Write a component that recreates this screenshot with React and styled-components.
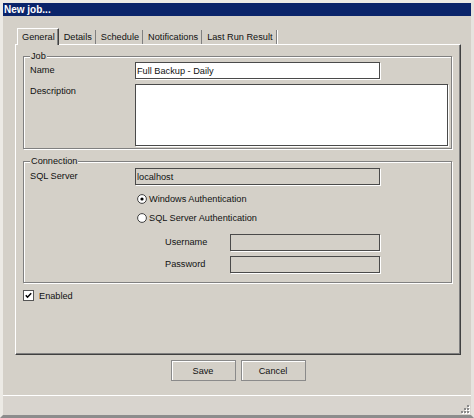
import React from 'react'
import styled, { createGlobalStyle } from 'styled-components'

const GlobalStyle = createGlobalStyle`
  body {
    margin: 0;
    background: #d4d0c8;
  }
`

const tabs = ['General', 'Details', 'Schedule', 'Notifications', 'Last Run Result']

function Radio({ checked }) {
  return (
    <svg width="10" height="10" viewBox="0 0 10 10">
      <circle cx="5" cy="5" r="4.4" fill="#fff" stroke="#404040" strokeWidth="1" />
      {checked && <circle cx="5" cy="5" r="1.6" fill="#000" />}
    </svg>
  )
}

function Checkbox() {
  return (
    <svg width="11" height="11" viewBox="0 0 11 11">
      <rect x="0.5" y="0.5" width="10" height="10" fill="#fff" stroke="#555" />
      <path d="M2.8 5.2 L4.5 7.2 L8.2 3.2" fill="none" stroke="#000" strokeWidth="1.5" />
    </svg>
  )
}

function Grip() {
  const dots = [
    [8, 2],
    [5, 5], [8, 5],
    [2, 8], [5, 8], [8, 8],
  ]
  return (
    <svg width="11" height="11" viewBox="0 0 11 11">
      {dots.map(([x, y]) => (
        <g key={x + '-' + y}>
          <rect x={x + 1} y={y + 1} width="2" height="2" fill="#fff" />
          <rect x={x} y={y} width="2" height="2" fill="#8a8a8a" />
        </g>
      ))}
    </svg>
  )
}

export default function App() {
  return (
    <>
      <GlobalStyle />
      <Window>
        <TitleBar>New job...</TitleBar>
        <Body>
          <TabStrip>
            {tabs.map((tab, i) => (
              <Tab key={tab} $active={i === 0}>
                {tab}
              </Tab>
            ))}
          </TabStrip>
          <TabPanel>
            <GroupBox $mt={11} $pt={5} $pb={2}>
              <Legend>Job</Legend>
              <FormRow>
                <Label>Name</Label>
                <TextInput value="Full Backup - Daily" readOnly $width={245} />
              </FormRow>
              <FormRow $mt={5}>
                <Label $top>Description</Label>
                <TextArea readOnly />
              </FormRow>
            </GroupBox>

            <GroupBox $mt={12} $pt={6} $pb={9}>
              <Legend>Connection</Legend>
              <FormRow>
                <Label>SQL Server</Label>
                <TextInput value="localhost" readOnly $width={245} $disabled />
              </FormRow>
              <FormRow $mt={7}>
                <span />
                <Option>
                  <Radio checked />
                  Windows Authentication
                </Option>
              </FormRow>
              <FormRow $mt={6}>
                <span />
                <Option>
                  <Radio />
                  SQL Server Authentication
                </Option>
              </FormRow>
              <CredentialRow $mt={10}>
                <Label>Username</Label>
                <TextInput readOnly $width={150} $disabled />
              </CredentialRow>
              <CredentialRow $mt={5}>
                <Label>Password</Label>
                <TextInput type="password" readOnly $width={150} $disabled />
              </CredentialRow>
            </GroupBox>

            <CheckRow>
              <Checkbox />
              Enabled
            </CheckRow>
          </TabPanel>

          <ButtonRow>
            <Button>Save</Button>
            <Button>Cancel</Button>
          </ButtonRow>
        </Body>
        <StatusBar>
          <Grip />
        </StatusBar>
      </Window>
    </>
  )
}

const Window = styled.div`
  width: 474px;
  height: 418px;
  box-sizing: border-box;
  display: flex;
  flex-direction: column;
  background: #d4d0c8;
  border-left: 3px solid #eceae5;
  border-top: 3px solid #eceae5;
  border-right: 3px solid #e6e3de;
  border-bottom: 3px solid #8c8c8c;
  font-family: 'Liberation Sans', Arial, sans-serif;
  font-size: 9.2px;
  color: #111;
`

const TitleBar = styled.div`
  height: 13px;
  line-height: 13px;
  padding-left: 1px;
  background: #0a246a;
  color: #fff;
  font-size: 10px;
  font-weight: bold;
`

const Body = styled.div`
  flex: 1;
  display: flex;
  flex-direction: column;
  padding: 12px 10px 0 12px;
`

const TabStrip = styled.div`
  display: flex;
  align-items: flex-end;
  height: 16px;
  padding-left: 2px;
`

const Tab = styled.div`
  box-sizing: border-box;
  position: relative;
  display: flex;
  align-items: center;
  background: #d4d0c8;
  white-space: nowrap;
  ${p =>
    p.$active
      ? `
    height: 17px;
    margin-bottom: -1px;
    z-index: 1;
    padding: 0 3px 1px 4px;
    border-top: 1px solid #fff;
    border-left: 1px solid #fff;
    border-right: 1px solid #404040;
    box-shadow: inset -1px 0 0 #808080;
  `
      : `
    height: 14px;
    padding: 0 3px 0 5px;
    border-right: 1px solid #808080;
    box-shadow: 1px 0 0 #fff;
  `}
`

const TabPanel = styled.div`
  box-sizing: border-box;
  width: 446px;
  height: 311px;
  display: flex;
  flex-direction: column;
  padding: 0 8px 0 7px;
  border-top: 1px solid #fff;
  border-left: 1px solid #fff;
  border-right: 1px solid #404040;
  border-bottom: 1px solid #404040;
  box-shadow: inset -1px -1px 0 #808080;
`

const GroupBox = styled.div`
  position: relative;
  margin-top: ${p => p.$mt}px;
  padding: ${p => p.$pt}px 3px ${p => p.$pb}px 6px;
  border: 1px solid #808080;
  box-shadow: 1px 1px 0 #fff, inset 1px 1px 0 #fff;
`

const Legend = styled.span`
  position: absolute;
  top: -6px;
  left: 6px;
  padding: 0 1px;
  line-height: 10px;
  background: #d4d0c8;
`

const FormRow = styled.div`
  display: grid;
  grid-template-columns: 105px 1fr;
  align-items: center;
  margin-top: ${p => p.$mt || 0}px;
`

const CredentialRow = styled.div`
  display: grid;
  grid-template-columns: 65px 150px;
  align-items: center;
  margin-top: ${p => p.$mt || 0}px;
  padding-left: 135px;
`

const Label = styled.span`
  align-self: ${p => (p.$top ? 'start' : 'center')};
  padding-top: ${p => (p.$top ? 2 : 0)}px;
  line-height: 11px;
  white-space: nowrap;
`

const TextInput = styled.input`
  box-sizing: border-box;
  width: ${p => p.$width}px;
  height: 17px;
  margin: 0;
  padding: 0 1px;
  border: 1px solid #4a4a4a;
  border-radius: 0;
  background: ${p => (p.$disabled ? '#d4d0c8' : '#fff')};
  box-shadow: 1px 1px 0 #fff;
  font: inherit;
  color: #111;
  outline: none;
`

const TextArea = styled.textarea`
  box-sizing: border-box;
  width: 100%;
  height: 62px;
  margin: 0;
  padding: 1px;
  border: 1px solid #4a4a4a;
  border-radius: 0;
  background: #fff;
  box-shadow: 1px 1px 0 #fff;
  font: inherit;
  resize: none;
  outline: none;
  display: block;
`

const Option = styled.label`
  display: flex;
  align-items: center;
  gap: 2px;
  height: 13px;
  margin-left: 2px;
  white-space: nowrap;
`

const CheckRow = styled.label`
  display: flex;
  align-items: center;
  gap: 5px;
  height: 11px;
  margin-top: 7px;
`

const ButtonRow = styled.div`
  display: flex;
  justify-content: center;
  gap: 5px;
  margin-top: 5px;
`

const Button = styled.button`
  box-sizing: border-box;
  width: 65px;
  height: 21px;
  margin: 0;
  padding: 0;
  background: #d4d0c8;
  border: 1px solid #8a8a8a;
  border-radius: 0;
  box-shadow: inset 1px 1px 0 #fff;
  font: inherit;
  color: #111;
`

const StatusBar = styled.div`
  height: 18px;
  display: flex;
  justify-content: flex-end;
  align-items: flex-end;
  padding: 0 1px 1px 0;
  background: #d8d4ce;
  border-top: 1px solid #fff;
`
